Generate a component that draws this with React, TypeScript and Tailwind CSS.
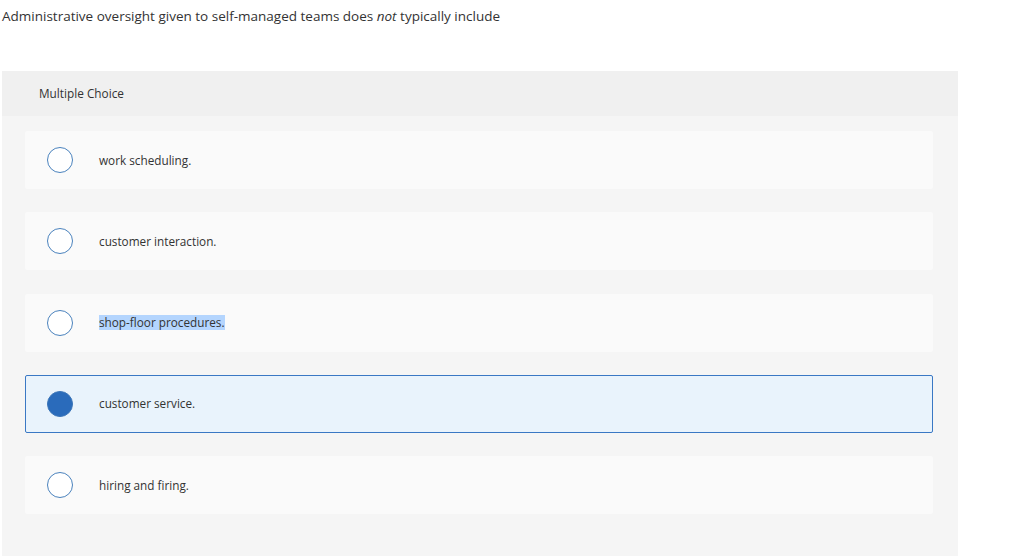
import React from "react";

const options = [
  { label: "work scheduling.", selected: false, highlight: false },
  { label: "customer interaction.", selected: false, highlight: false },
  { label: "shop-floor procedures.", selected: false, highlight: true },
  { label: "customer service.", selected: true, highlight: false },
  { label: "hiring and firing.", selected: false, highlight: false },
];

export default function App() {
  return (
    <div
      className="w-[1024px] h-[556px] bg-white overflow-hidden text-[#333]"
      style={{ fontFamily: "'Open Sans', Lato, sans-serif" }}
    >
      <div className="pl-[2px] pt-[7px] h-[71px] text-[13.5px] leading-[18px]">
        Administrative oversight given to self-managed teams does <em>not</em> typically include
      </div>
      <div className="ml-[2px] w-[956px] bg-[#f5f5f5] h-[485px]">
        <div className="h-[45px] bg-[#f0f0f0] pl-[37px] flex items-center text-[11.8px]">
          Multiple Choice
        </div>
        <div className="pt-[15px] pl-[23px] flex flex-col gap-[23.25px]">
          {options.map((o) => (
            <div
              key={o.label}
              className={
                o.selected
                  ? "w-[908px] h-[58px] flex items-center bg-[#e9f3fc] border border-[#3a78c4] rounded-[2px]"
                  : "w-[908px] h-[58px] flex items-center bg-[#fafafa] rounded-[2px] border border-transparent"
              }
            >
              <div className="w-[73px] flex items-center pl-[21px]">
                {o.selected ? (
                  <div className="w-[26px] h-[26px] rounded-full bg-[#2a6bbb] border border-[#3b75b8]" />
                ) : (
                  <div className="w-[26px] h-[26px] rounded-full bg-white border-[1.5px] border-[#4a82bd]" />
                )}
              </div>
              <span
                className={
                  o.highlight
                    ? "text-[11.75px] bg-[#b4d5fe] leading-[15px]"
                    : "text-[11.75px] leading-[15px]"
                }
              >
                {o.label}
              </span>
            </div>
          ))}
        </div>
      </div>
    </div>
  );
}
